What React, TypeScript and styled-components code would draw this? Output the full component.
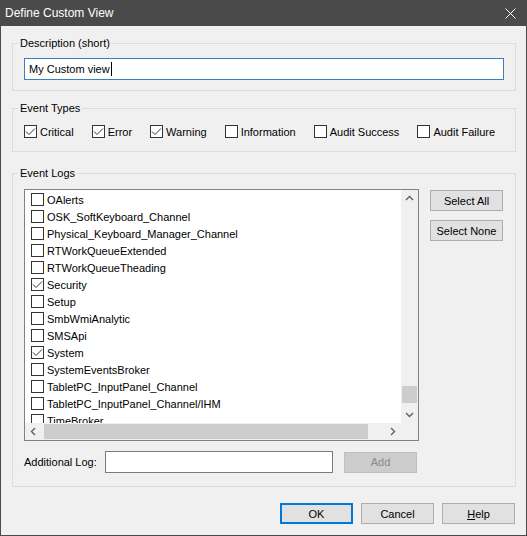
import React from 'react'
import styled, { createGlobalStyle } from 'styled-components'

type LogEntry = {
    name: string
    checked: boolean
}

const eventTypes: LogEntry[] = [
    { name: 'Critical', checked: true },
    { name: 'Error', checked: true },
    { name: 'Warning', checked: true },
    { name: 'Information', checked: false },
    { name: 'Audit Success', checked: false },
    { name: 'Audit Failure', checked: false },
]

const eventLogs: LogEntry[] = [
    { name: 'OAlerts', checked: false },
    { name: 'OSK_SoftKeyboard_Channel', checked: false },
    { name: 'Physical_Keyboard_Manager_Channel', checked: false },
    { name: 'RTWorkQueueExtended', checked: false },
    { name: 'RTWorkQueueTheading', checked: false },
    { name: 'Security', checked: true },
    { name: 'Setup', checked: false },
    { name: 'SmbWmiAnalytic', checked: false },
    { name: 'SMSApi', checked: false },
    { name: 'System', checked: true },
    { name: 'SystemEventsBroker', checked: false },
    { name: 'TabletPC_InputPanel_Channel', checked: false },
    { name: 'TabletPC_InputPanel_Channel/IHM', checked: false },
    { name: 'TimeBroker', checked: false },
]

type Direction = 'up' | 'down' | 'left' | 'right'

const rotation: { [key in Direction]: number } = {
    up: 0,
    right: 90,
    down: 180,
    left: 270,
}

function Chevron({ dir }: { dir: Direction }): JSX.Element {
    return (
        <ChevronSvg viewBox="0 0 9 9" $rot={rotation[dir]}>
            <polyline
                points="1,6 4.5,2.5 8,6"
                fill="none"
                stroke="#606060"
                strokeWidth="1.4"
            />
        </ChevronSvg>
    )
}

function CheckBox({ checked }: { checked: boolean }): JSX.Element {
    return (
        <Box>
            {checked && (
                <svg width="11" height="11" viewBox="0 0 11 11">
                    <polyline
                        points="1,5.5 4,8.5 10,2.5"
                        fill="none"
                        stroke="#333"
                        strokeWidth="1"
                    />
                </svg>
            )}
        </Box>
    )
}

export default function App(): JSX.Element {
    return (
        <>
            <GlobalStyle />
            <Window>
                <TitleBar>
                    <Title>Define Custom View</Title>
                    <CloseButton>
                        <svg width="11" height="11" viewBox="0 0 11 11">
                            <path
                                d="M0.5 0.5 L10.5 10.5 M10.5 0.5 L0.5 10.5"
                                stroke="#fff"
                                strokeWidth="1"
                            />
                        </svg>
                    </CloseButton>
                </TitleBar>

                <Body>
                    <GroupBox>
                        <Legend>Description (short)</Legend>
                        <GroupContent $pad="7px 11px 10px 11px">
                            <TextBox $focused>
                                My Custom view
                                <Caret />
                            </TextBox>
                        </GroupContent>
                    </GroupBox>

                    <GroupBox $mt={9}>
                        <Legend>Event Types</Legend>
                        <GroupContent $pad="7px 11px 11px 11px">
                            <TypeRow>
                                {eventTypes.map((t) => (
                                    <CheckItem key={t.name}>
                                        <CheckBox checked={t.checked} />
                                        {t.name}
                                    </CheckItem>
                                ))}
                            </TypeRow>
                        </GroupContent>
                    </GroupBox>

                    <GroupBox $mt={13}>
                        <Legend>Event Logs</Legend>
                        <GroupContent $pad="8px 12px 13px 11px">
                            <LogsRow>
                                <ListBox>
                                    <Viewport>
                                        {eventLogs.map((log) => (
                                            <LogRow key={log.name}>
                                                <CheckBox checked={log.checked} />
                                                {log.name}
                                            </LogRow>
                                        ))}
                                    </Viewport>
                                    <VScroll>
                                        <ArrowCell>
                                            <Chevron dir="up" />
                                        </ArrowCell>
                                        <VTrack>
                                            <VThumb />
                                        </VTrack>
                                        <ArrowCell>
                                            <Chevron dir="down" />
                                        </ArrowCell>
                                    </VScroll>
                                    <HScroll>
                                        <ArrowCell>
                                            <Chevron dir="left" />
                                        </ArrowCell>
                                        <HTrack>
                                            <HThumb $size={324} />
                                        </HTrack>
                                        <ArrowCell>
                                            <Chevron dir="right" />
                                        </ArrowCell>
                                    </HScroll>
                                    <Corner />
                                </ListBox>
                                <SideButtons>
                                    <Button>Select All</Button>
                                    <Button>Select None</Button>
                                </SideButtons>
                            </LogsRow>
                            <AddRow>
                                <FieldLabel>Additional Log:</FieldLabel>
                                <TextBox $width={228} />
                                <Button $disabled>Add</Button>
                            </AddRow>
                        </GroupContent>
                    </GroupBox>

                    <Footer>
                        <Button $default>OK</Button>
                        <Button>Cancel</Button>
                        <Button>
                            <u>H</u>elp
                        </Button>
                    </Footer>
                </Body>
            </Window>
        </>
    )
}

const GlobalStyle = createGlobalStyle`
    * {
        box-sizing: border-box;
    }
    html, body {
        margin: 0;
        padding: 0;
        background: #f0f0f0;
    }
    body {
        font-family: 'Liberation Sans', Arial, sans-serif;
        font-size: 11px;
        color: #000;
    }
`

const Window = styled.div`
    width: 527px;
    height: 536px;
    display: flex;
    flex-direction: column;
    background: #f0f0f0;
    border: 1px solid #4a4a4a;
    border-top: none;
`

const TitleBar = styled.div`
    height: 26px;
    flex-shrink: 0;
    display: flex;
    align-items: center;
    justify-content: space-between;
    background: #4a4a4a;
    padding-left: 4px;
`

const Title = styled.span`
    color: #fff;
    font-size: 12px;
`

const CloseButton = styled.div`
    width: 30px;
    height: 26px;
    display: flex;
    align-items: center;
    justify-content: center;
    margin-right: 1px;
`

const Body = styled.div`
    flex: 1;
    display: flex;
    flex-direction: column;
    padding: 9px 10px 0 11px;
`

const GroupBox = styled.fieldset<{ $mt?: number }>`
    margin: ${(p) => p.$mt ?? 0}px 0 0 0;
    padding: 0;
    min-width: 0;
    border: 1px solid #dcdcdc;
`

const Legend = styled.legend`
    margin-left: 5px;
    padding: 0 2px;
    line-height: 16px;
    font-size: 11px;
`

const GroupContent = styled.div<{ $pad: string }>`
    padding: ${(p) => p.$pad};
`

const TextBox = styled.div<{ $focused?: boolean; $width?: number }>`
    height: 22px;
    width: ${(p) => (p.$width ? `${p.$width}px` : '100%')};
    display: flex;
    align-items: center;
    padding: 0 4px;
    background: #fff;
    border: 1px solid ${(p) => (p.$focused ? '#3b7fc0' : '#7a7a7a')};
    white-space: nowrap;
`

const Caret = styled.span`
    display: inline-block;
    width: 1px;
    height: 14px;
    margin-left: 1px;
    background: #000;
`

const TypeRow = styled.div`
    display: flex;
    align-items: center;
    gap: 18px;
    height: 17px;
`

const CheckItem = styled.label`
    display: flex;
    align-items: center;
    gap: 3px;
    white-space: nowrap;
`

const Box = styled.span`
    width: 13px;
    height: 13px;
    flex-shrink: 0;
    display: flex;
    align-items: center;
    justify-content: center;
    background: #fff;
    border: 1px solid #333;
`

const LogsRow = styled.div`
    display: flex;
    align-items: flex-start;
    gap: 11px;
`

const ListBox = styled.div`
    width: 395px;
    height: 252px;
    flex-shrink: 0;
    display: grid;
    grid-template-columns: 1fr 17px;
    grid-template-rows: 1fr 17px;
    background: #fff;
    border: 1px solid #828282;
`

const Viewport = styled.div`
    overflow: hidden;
    padding: 1px 0 0 6px;
`

const LogRow = styled.div`
    height: 17px;
    display: flex;
    align-items: center;
    gap: 3px;
    white-space: nowrap;
`

const VScroll = styled.div`
    display: flex;
    flex-direction: column;
    background: #f0f0f0;
`

const HScroll = styled.div`
    display: flex;
    background: #f0f0f0;
`

const ArrowCell = styled.div`
    width: 17px;
    height: 17px;
    flex-shrink: 0;
    display: flex;
    align-items: center;
    justify-content: center;
`

const ChevronSvg = styled.svg<{ $rot: number }>`
    width: 9px;
    height: 9px;
    transform: rotate(${(p) => p.$rot}deg);
`

const VTrack = styled.div`
    flex: 1;
    display: flex;
    flex-direction: column;
    justify-content: flex-end;
    align-items: center;
    padding-bottom: 3px;
`

const VThumb = styled.div`
    width: 15px;
    height: 17px;
    background: #cdcdcd;
`

const HTrack = styled.div`
    flex: 1;
    display: flex;
    align-items: center;
    padding-left: 2px;
`

const HThumb = styled.div<{ $size: number }>`
    width: ${(p) => p.$size}px;
    height: 15px;
    background: #cdcdcd;
`

const Corner = styled.div`
    background: #f0f0f0;
`

const SideButtons = styled.div`
    display: flex;
    flex-direction: column;
    gap: 9px;
    padding-top: 1px;
`

const Button = styled.button<{ $default?: boolean; $disabled?: boolean }>`
    width: 73px;
    height: 21px;
    padding: 0;
    font-family: inherit;
    font-size: 11px;
    color: ${(p) => (p.$disabled ? '#8a8a8a' : '#000')};
    background: ${(p) => (p.$disabled ? '#cccccc' : '#e1e1e1')};
    border: ${(p) =>
        p.$default
            ? '2px solid #0078d7'
            : p.$disabled
              ? '1px solid #bfbfbf'
              : '1px solid #adadad'};
`

const AddRow = styled.div`
    display: flex;
    align-items: center;
    margin-top: 10px;
    gap: 11px;
`

const FieldLabel = styled.span`
    width: 70px;
    white-space: nowrap;
`

const Footer = styled.div`
    display: flex;
    justify-content: flex-end;
    gap: 8px;
    margin-top: 16px;
    padding-right: 1px;
`
